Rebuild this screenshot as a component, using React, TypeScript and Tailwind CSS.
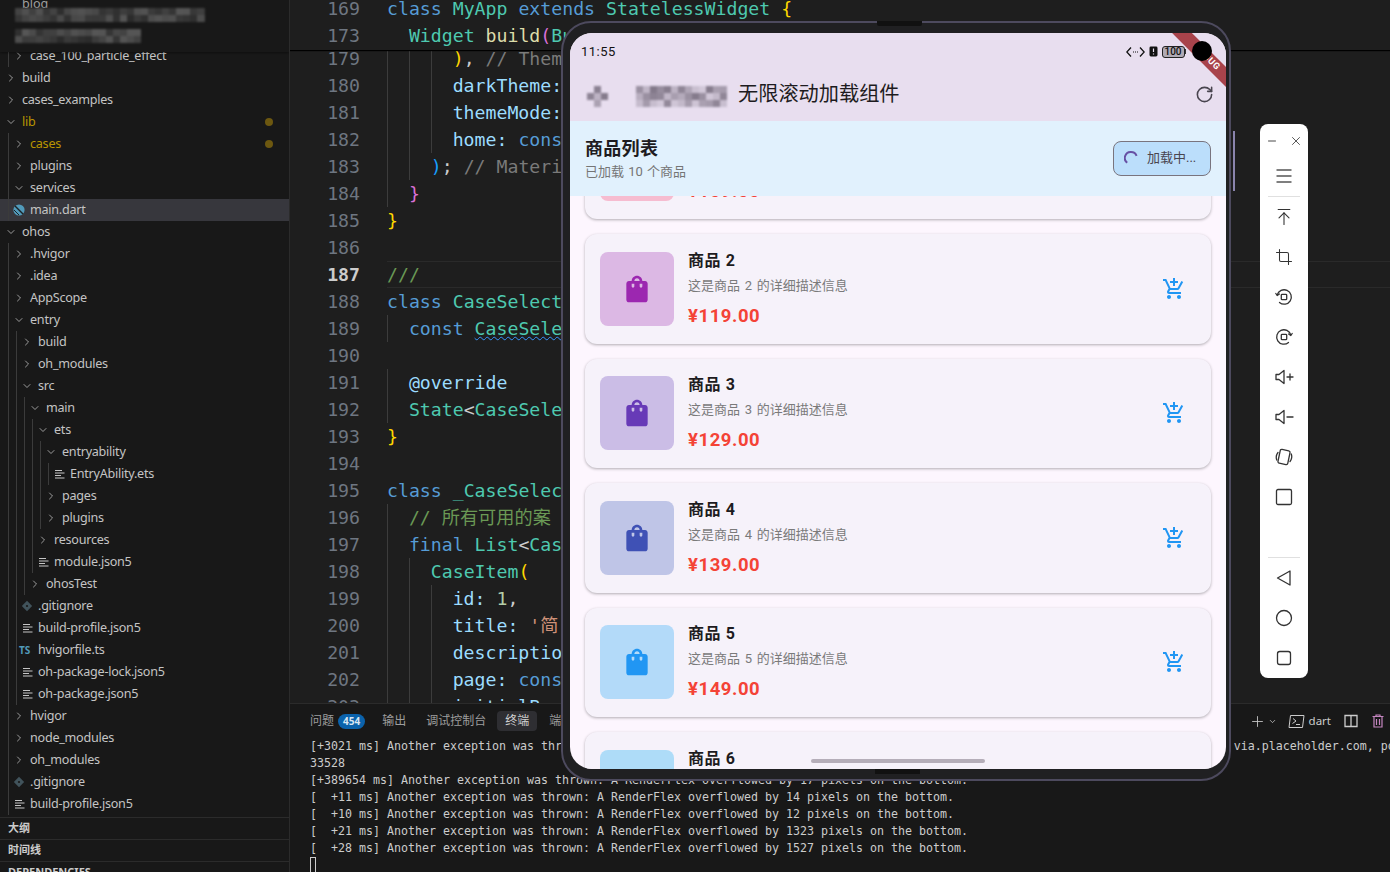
import React from "react";
import { ChevronRight, ChevronDown, RotateCw, Minus, X, Crop, ArrowUpToLine, Plus } from "lucide-react";
import { MdShoppingBag, MdAddShoppingCart } from "react-icons/md";

const sans = "font-['Noto_Sans','Noto_Sans_CJK_SC',sans-serif]";
const cjk = "font-['Roboto','Noto_Sans_CJK_SC',sans-serif]";

type Row = { t: string; d: number; k?: "o" | "c" | "dart" | "git" | "json" | "ts"; c?: string; active?: boolean; dot?: boolean };
const rows: Row[] = [
  { t: "case_100_particle_effect", d: 1, k: "c" },
  { t: "build", d: 0, k: "c" },
  { t: "cases_examples", d: 0, k: "c" },
  { t: "lib", d: 0, k: "o", c: "text-[#b89500]", dot: true },
  { t: "cases", d: 1, k: "c", c: "text-[#b89500]", dot: true },
  { t: "plugins", d: 1, k: "c" },
  { t: "services", d: 1, k: "o" },
  { t: "main.dart", d: 1, k: "dart", active: true },
  { t: "ohos", d: 0, k: "o" },
  { t: ".hvigor", d: 1, k: "c" },
  { t: ".idea", d: 1, k: "c" },
  { t: "AppScope", d: 1, k: "c" },
  { t: "entry", d: 1, k: "o" },
  { t: "build", d: 2, k: "c" },
  { t: "oh_modules", d: 2, k: "c" },
  { t: "src", d: 2, k: "o" },
  { t: "main", d: 3, k: "o" },
  { t: "ets", d: 4, k: "o" },
  { t: "entryability", d: 5, k: "o" },
  { t: "EntryAbility.ets", d: 6, k: "json" },
  { t: "pages", d: 5, k: "c" },
  { t: "plugins", d: 5, k: "c" },
  { t: "resources", d: 4, k: "c" },
  { t: "module.json5", d: 4, k: "json" },
  { t: "ohosTest", d: 3, k: "c" },
  { t: ".gitignore", d: 2, k: "git" },
  { t: "build-profile.json5", d: 2, k: "json" },
  { t: "hvigorfile.ts", d: 2, k: "ts" },
  { t: "oh-package-lock.json5", d: 2, k: "json" },
  { t: "oh-package.json5", d: 2, k: "json" },
  { t: "hvigor", d: 1, k: "c" },
  { t: "node_modules", d: 1, k: "c" },
  { t: "oh_modules", d: 1, k: "c" },
  { t: ".gitignore", d: 1, k: "git" },
  { t: "build-profile.json5", d: 1, k: "json" },
];

function Mosaic({ w, h, seed, light, size = 8, plus }: { w: number; h: number; seed: number; light?: boolean; size?: number; plus?: boolean }) {
  const cells: React.ReactNode[] = [];
  for (let y = 0; y < h; y += size) {
    for (let x = 0; x < w; x += size) {
      if (plus && x !== size && y !== size) continue;
      const n = Math.abs(Math.sin(seed + x * 12.9898 + y * 78.233) * 43758.5453) % 1;
      const fill = light
        ? `rgb(${Math.round(215 - n * 85)},${Math.round(205 - n * 85)},${Math.round(222 - n * 85)})`
        : `rgb(${Math.round(42 + n * 46)},${Math.round(42 + n * 46)},${Math.round(42 + n * 46)})`;
      cells.push(<rect key={`${x}-${y}`} x={x} y={y} width={size} height={size} fill={fill} />);
    }
  }
  return (
    <svg width={w} height={h} className="block blur-[1px]">
      {cells}
    </svg>
  );
}

function FileIcon({ k }: { k?: Row["k"] }) {
  if (k === "c") return <ChevronRight size={12} strokeWidth={1.5} className="text-[#c5c5c5] -ml-[3px]" />;
  if (k === "o") return <ChevronDown size={12} strokeWidth={1.5} className="text-[#c5c5c5] -ml-[3px]" />;
  if (k === "dart")
    return (
      <svg width="14" height="14" viewBox="0 0 14 14" className="-ml-[4px]">
        <circle cx="7" cy="7" r="5.6" fill="#519aba" />
        <path d="M3 3 L11 11" stroke="#1b2226" strokeWidth="1.4" />
        <path d="M2 7 L7 12" stroke="#1b2226" strokeWidth="1" />
      </svg>
    );
  if (k === "git")
    return (
      <svg width="12" height="12" viewBox="0 0 12 12" className="-ml-[3px]">
        <path d="M6 .8 11.2 6 6 11.2.8 6Z" fill="#41535b" />
        <circle cx="6" cy="6" r="1.1" fill="#181818" />
      </svg>
    );
  if (k === "ts") return <span className="-ml-[5px] text-[10px] font-bold leading-none text-[#519aba]">TS</span>;
  return (
    <svg width="12" height="12" viewBox="0 0 12 12" className="-ml-[2px]">
      <path d="M1 2.5h7M1 5h9.5M1 7.5h6M1 10h9.5" stroke="#c5c5c5" strokeWidth="1.2" />
    </svg>
  );
}

function TreeRow({ r }: { r: Row }) {
  const guides = Array.from({ length: r.d });
  return (
    <div className={`relative flex h-[22px] items-stretch pl-2 ${r.active ? "bg-[#37373d]" : ""}`}>
      {guides.map((_, i) => (
        <span key={i} className="w-2 shrink-0 border-l border-[#3b3b3b]" />
      ))}
      <span className="flex w-[14px] shrink-0 items-center">
        <FileIcon k={r.k} />
      </span>
      <span className={`flex items-center whitespace-pre text-[12.6px] tracking-[-0.25px] ${r.c ?? "text-[#c4c4c4]"}`}>{r.t}</span>
      {r.dot && <span className="ml-auto mr-4 h-2 w-2 self-center rounded-full bg-[#6d5810]" />}
    </div>
  );
}

function Sidebar() {
  return (
    <aside className={`${sans} relative isolate flex h-full w-[290px] shrink-0 flex-col overflow-hidden border-r border-[#2b2b2b] bg-[#181818]`}>
      <div className="relative z-10 h-[52px] shrink-0 bg-[#181818] pl-[15px] shadow-[0_1px_2px_rgba(0,0,0,0.4)]">
        <div className="h-[8px] overflow-hidden pl-[7px] text-[12.6px] leading-[8px] text-[#a0a0a0]">blog</div>
        <Mosaic w={190} h={14} seed={1} size={7} />
        <div className="h-[7px]" />
        <Mosaic w={126} h={14} seed={5} size={7} />
        <div className="h-[2px]" />
      </div>
      <div className="-mt-[7px]">
        {rows.map((r, i) => (
          <TreeRow key={i} r={r} />
        ))}
      </div>
      <div className="mt-[2px] text-[11px] font-bold text-[#cccccc]">
        <div className="flex h-[22px] items-center border-t border-[#2b2b2b] pl-2">大纲</div>
        <div className="flex h-[22px] items-center border-t border-[#2b2b2b] pl-2">时间线</div>
        <div className="flex h-[22px] items-center border-t border-[#2b2b2b] pl-2">DEPENDENCIES</div>
      </div>
    </aside>
  );
}

const K = "text-[#569cd6]";
const T = "text-[#4ec9b0]";
const P = "text-[#9cdcfe]";
const F = "text-[#dcdcaa]";
const W = "text-[#cccccc]";
const C = "text-[#7a7a7a]";
const G = "text-[#6a9955]";
const Y = "text-[#ffd700]";
const M = "text-[#da70d6]";
const B = "text-[#179fff]";
const S = "text-[#ce9178]";
const N = "text-[#b5cea8]";

type Seg = [string, string];
type Line = { n: number; g?: number; segs: Seg[]; cur?: boolean };
const lines: Line[] = [
  { n: 179, g: 3, segs: [[")", Y], [", ", W], ["// Them", C]] },
  { n: 180, g: 3, segs: [["darkTheme:", P]] },
  { n: 181, g: 3, segs: [["themeMode:", P]] },
  { n: 182, g: 3, segs: [["home: ", P], ["cons", K]] },
  { n: 183, g: 2, segs: [[")", B], ["; ", W], ["// Materi", C]] },
  { n: 184, g: 1, segs: [["}", M]] },
  { n: 185, segs: [["}", Y]] },
  { n: 186, segs: [] },
  { n: 187, segs: [["///", G]], cur: true },
  { n: 188, segs: [["class ", K], ["CaseSelect", T]] },
  { n: 189, g: 1, segs: [["const ", K], ["CaseSele", T]] },
  { n: 190, segs: [] },
  { n: 191, g: 1, segs: [["@override", P]] },
  { n: 192, g: 1, segs: [["State", T], ["<", W], ["CaseSele", T]] },
  { n: 193, segs: [["}", Y]] },
  { n: 194, segs: [] },
  { n: 195, segs: [["class ", K], ["_CaseSelec", T]] },
  { n: 196, g: 1, segs: [["// 所有可用的案", G]] },
  { n: 197, g: 1, segs: [["final ", K], ["List", T], ["<", W], ["Cas", T]] },
  { n: 198, g: 2, segs: [["CaseItem", T], ["(", Y]] },
  { n: 199, g: 3, segs: [["id: ", P], ["1", N], [",", W]] },
  { n: 200, g: 3, segs: [["title: ", P], ["'简", S]] },
  { n: 201, g: 3, segs: [["descriptio", P]] },
  { n: 202, g: 3, segs: [["page: ", P], ["cons", K]] },
  { n: 203, g: 3, segs: [["initialB", P]] },
];

function CodeRow({ l }: { l: Line }) {
  return (
    <div className="flex h-[27px] leading-[27px]">
      <span className={`w-[71px] shrink-0 pr-[1px] text-right ${l.cur ? "font-bold text-[#cccccc]" : "text-[#6e7681]"}`}>{l.n}</span>
      <div className={`ml-[26px] flex min-w-0 flex-1 whitespace-pre ${l.cur ? "border-y border-[#2a2a2a]" : ""}`}>
        {Array.from({ length: l.g ?? 0 }).map((_, i) => (
          <span key={i} className="w-[21.9px] shrink-0 border-l border-[#3c3c3c]" />
        ))}
        <span className={`${l.cur ? "-mt-px" : ""}`}>
          {l.n === 189 ? (
            <>
              <span className={K}>const </span>
              <span className={`${T} underline decoration-wavy decoration-[#3794ff] decoration-1`}>CaseSele</span>
            </>
          ) : (
            l.segs.map((s, i) => (
              <span key={i} className={s[1]}>
                {s[0]}
              </span>
            ))
          )}
        </span>
      </div>
    </div>
  );
}

function Editor() {
  return (
    <div className="relative isolate h-[703px] shrink-0 overflow-hidden bg-[#1e1e1e] font-['DejaVu_Sans_Mono','Noto_Sans_CJK_SC',monospace] text-[18.2px]">
      <div className="relative z-10 h-[50px] overflow-hidden bg-[#1e1e1e] shadow-[0_1px_1px_#000]">
        <div className="-mt-[5px]">
          <CodeRow l={{ n: 169, segs: [["class ", K], ["MyApp ", T], ["extends ", K], ["StatelessWidget ", T], ["{", Y]] }} />
          <CodeRow l={{ n: 173, segs: [["  ", W], ["Widget ", T], ["build", F], ["(", M], ["Bu", T]] }} />
        </div>
      </div>
      <div className="-mt-[5px]">
        {lines.map((l) => (
          <CodeRow key={l.n} l={l} />
        ))}
      </div>
    </div>
  );
}

const term = [
  "[+3021 ms] Another exception was thrown: Failed to load image from".padEnd(132, " ") + "via.placeholder.com, port",
  "33528",
  "[+389654 ms] Another exception was thrown: A RenderFlex overflowed by 17 pixels on the bottom.",
  "[  +11 ms] Another exception was thrown: A RenderFlex overflowed by 14 pixels on the bottom.",
  "[  +10 ms] Another exception was thrown: A RenderFlex overflowed by 12 pixels on the bottom.",
  "[  +21 ms] Another exception was thrown: A RenderFlex overflowed by 1323 pixels on the bottom.",
  "[  +28 ms] Another exception was thrown: A RenderFlex overflowed by 1527 pixels on the bottom.",
];

function Panel() {
  return (
    <div className="flex min-h-0 flex-1 flex-col overflow-hidden border-t border-[#2b2b2b] bg-[#181818]">
      <div className={`${sans} flex h-[34px] shrink-0 items-center pl-[20px] text-[12px] text-[#9d9d9d]`}>
        <span>问题</span>
        <span className="ml-[4px] rounded-full bg-[#0b62ab] px-[5px] text-[10px] font-bold leading-[15px] text-[#d8e6f2]">454</span>
        <span className="ml-[17px]">输出</span>
        <span className="ml-[20px]">调试控制台</span>
        <span className="ml-[11px] rounded-[4px] bg-[#2e2e32] px-[8px] py-[1px] text-[#d0d0d0]">终端</span>
        <span className="ml-[12px]">端口</span>
        <div className="ml-auto flex items-center text-[#cccccc]">
          <Plus size={17} strokeWidth={1.2} />
          <ChevronDown size={9} className="ml-[2px]" />
          <svg width="17" height="15" viewBox="0 0 17 15" className="ml-[11px]">
            <path d="M2.5 1.5h13.5l-1.5 12H1z" fill="none" stroke="#cccccc" />
            <path d="M5 4.5l3 2.5-3.5 2.5M8 10.5h4" fill="none" stroke="#cccccc" />
          </svg>
          <span className="ml-[4px] text-[11.5px]">dart</span>
          <svg width="14" height="14" viewBox="0 0 14 14" className="ml-[13px]">
            <path d="M1 1.5h12v11H1zM7 1.5v11" fill="none" stroke="#cccccc" strokeWidth="1.3" />
          </svg>
          <svg width="12" height="14" viewBox="0 0 12 14" className="ml-[14px] mr-[6px]">
            <path d="M.5 2.5h11M4 2.5V1h4v1.5M2 2.5V13h8V2.5M4.5 5v6M7.5 5v6" fill="none" stroke="#c586c0" strokeWidth="1.2" />
          </svg>
        </div>
      </div>
      <div className="pl-[20px] font-['DejaVu_Sans_Mono',monospace] text-[11.64px] leading-[17px] whitespace-pre text-[#cccccc]">
        {term.map((t, i) => (
          <div key={i} className="h-[17px]">
            {t}
          </div>
        ))}
        <div className="h-[17px] w-[6px] border border-[#cccccc]" />
      </div>
    </div>
  );
}

const products = [
  { n: 1, price: "¥109.00", thumb: "bg-[#f6bcd0]", icon: "text-[#e91e63]" },
  { n: 2, price: "¥119.00", thumb: "bg-[#dcb8e4]", icon: "text-[#9c27b0]" },
  { n: 3, price: "¥129.00", thumb: "bg-[#cbbde6]", icon: "text-[#673ab7]" },
  { n: 4, price: "¥139.00", thumb: "bg-[#bfc5e7]", icon: "text-[#3f51b5]" },
  { n: 5, price: "¥149.00", thumb: "bg-[#b3daf9]", icon: "text-[#2196f3]" },
  { n: 6, price: "¥159.00", thumb: "bg-[#aedcf8]", icon: "text-[#03a9f4]" },
];

function ProductCard({ p }: { p: (typeof products)[number] }) {
  return (
    <div className="flex h-[109.5px] shrink-0 items-center rounded-[12px] bg-[#f6f2fa] pl-[15px] pr-[25px] shadow-[0_1px_3px_rgba(0,0,0,0.3)]">
      <div className={`flex h-[74px] w-[74px] shrink-0 items-center justify-center rounded-[8px] ${p.thumb}`}>
        <MdShoppingBag size={32} className={p.icon} />
      </div>
      <div className="ml-[14px] flex flex-col">
        <div className="text-[16px] font-bold leading-[22px] tracking-[0.6px] text-[#1d1b20]">商品 {p.n}</div>
        <div className="mt-[5px] text-[13px] leading-[18px] text-[#7a7a7a] [word-spacing:1.5px]">这是商品 {p.n} 的详细描述信息</div>
        <div className="mt-[9px] text-[18.5px] font-bold leading-[24px] tracking-[0.55px] text-[#f44336]">{p.price}</div>
      </div>
      <MdAddShoppingCart size={24} className="ml-auto text-[#2196f3]" />
    </div>
  );
}

function Phone() {
  return (
    <div className="absolute left-[561px] top-[21px] z-20 h-[760px] w-[670px] rounded-[30px] border-2 border-[#4d4a5e] bg-[#202022] p-[2px]">
      <div className="absolute left-[314px] -top-[2px] h-[5px] w-[45px] rounded-b-[2px] bg-[#111]" />
      <div className="absolute left-[312px] top-[746px] h-[5px] w-[45px] bg-[#111]" />
      <div className={`${cjk} absolute left-[7px] top-[10px] flex h-[736px] w-[656px] flex-col overflow-hidden rounded-[22px] bg-[#fdf6fe]`}>
        <div className="relative z-10 flex h-[88px] shrink-0 flex-col bg-[#e8deef]">
          <div className="flex h-[37px] shrink-0 items-center pl-[11px] pr-[13px]">
            <span className="text-[13px] tracking-[0.5px] text-[#111]">11:55</span>
            <div className="ml-auto flex items-center">
              <svg width="19" height="12" viewBox="0 0 19 12">
                <path d="M5 1.5.8 6 5 10.5M14 1.5 18.2 6 14 10.5" fill="none" stroke="#111" strokeWidth="1.3" />
                <path d="M7 6h1M9 6h1M11 6h1" stroke="#111" strokeWidth="1.2" />
              </svg>
              <svg width="9" height="11" viewBox="0 0 9 11" className="ml-[4px]">
                <rect x=".5" y=".5" width="8" height="10" rx="1.4" fill="#111" />
                <path d="M4.5 2.5v3.5M4.5 7.5v1" stroke="#e8deef" strokeWidth="1.2" />
              </svg>
              <span className="ml-[4px] flex h-[12px] w-[23px] items-center justify-center rounded-[3px] border border-[#222] bg-[#b0aab4] text-[10px] font-medium leading-none text-[#111]">100</span>
              <span className="h-[5px] w-[1.5px] bg-[#333]" />
              <span className="w-[27px]" />
            </div>
          </div>
          <div className="flex min-h-0 flex-1 items-center pb-[3px] pl-[17px] pr-[12px]">
            <span className="mt-[5px]">
              <Mosaic w={21} h={21} seed={3} light size={7} plus />
            </span>
            <span className="ml-[28px] mt-[5px]">
              <Mosaic w={91} h={21} seed={9} light size={7} />
            </span>
            <span className="ml-[11px] text-[20.2px] text-[#1d1b20]">无限滚动加载组件</span>
            <RotateCw size={19} strokeWidth={2} className="ml-auto text-[#49454f]" />
          </div>
        </div>
        <div className="relative z-10 flex h-[75px] shrink-0 items-center justify-between bg-[#e1f1fd] pl-[15px] pr-[15px]">
          <div>
            <div className="-mt-[1px] pb-[1px] text-[18px] font-bold leading-[26px] tracking-[0.3px] text-[#1d1b20]">商品列表</div>
            <div className="text-[13px] leading-[18px] text-[#757575] [word-spacing:1px]">已加载 10 个商品</div>
          </div>
          <div className="flex h-[35px] w-[98px] items-center rounded-[8px] border border-[#79747e] bg-[#bbdefb] pb-[1px] pl-[10px]">
            <svg width="14" height="14" viewBox="0 0 14 14" className="shrink-0">
              <path d="M3.2 11.8A6 6 0 0 1 7 1a6 6 0 0 1 5.6 3.8" fill="none" stroke="#6750a4" strokeWidth="2" />
            </svg>
            <span className="ml-[9px] text-[13px] text-[#49454f]">加载中...</span>
          </div>
        </div>
        <div className="-mt-[86.5px] flex flex-col gap-[15px] px-[15px]">
          {products.map((p) => (
            <ProductCard key={p.n} p={p} />
          ))}
        </div>
        <div className="absolute bottom-[6px] left-[241px] z-10 h-[4px] w-[174px] rounded-full bg-[#b5aeb9]" />
        <div className="absolute left-[587px] top-[18px] z-20 flex h-[14px] w-[100px] rotate-45 items-center justify-center bg-[#a8434b] text-[9px] font-bold tracking-[0.5px] text-white">DEBUG</div>
        <div className="absolute left-[622px] top-[8px] z-30 h-[20px] w-[20px] rounded-full bg-black" />
      </div>
      <div className="absolute -right-[6px] top-[108px] h-[60px] w-[2px] bg-[#8a84ad]" />
    </div>
  );
}

function Ico({ children }: { children: React.ReactNode }) {
  return (
    <div className="flex h-[40px] items-center justify-center text-[#333]">
      <svg width="20" height="20" viewBox="0 0 20 20" fill="none" stroke="#333" strokeWidth="1.3" strokeLinejoin="round" strokeLinecap="round">
        {children}
      </svg>
    </div>
  );
}

function Toolbar() {
  return (
    <div className="absolute left-[1260px] top-[124px] z-20 flex h-[554px] w-[48px] flex-col rounded-[8px] bg-white">
      <div className="flex h-[32px] shrink-0 items-center justify-between pl-[6px] pr-[5px] pt-[1px] text-[#333]">
        <Minus size={12} strokeWidth={1.8} />
        <X size={14} strokeWidth={1.4} />
      </div>
      <div className="flex h-[40px] shrink-0 items-center justify-center">
        <svg width="16" height="14" viewBox="0 0 16 14">
          <path d="M.5 1h15M.5 7h15M.5 13h15" stroke="#555" strokeWidth="1.3" />
        </svg>
      </div>
      <div className="mx-[8px] h-px shrink-0 bg-[#e0e0e0]" />
      <div className="flex h-[40px] items-center justify-center">
        <ArrowUpToLine size={20} strokeWidth={1.3} className="text-[#333]" />
      </div>
      <div className="flex h-[40px] items-center justify-center">
        <Crop size={18} strokeWidth={1.4} className="text-[#333]" />
      </div>
      <Ico>
        <path d="M3.2 8A7.2 7.2 0 1 1 5.5 15.5" />
        <path d="M1.8 6.5 3.2 8.5 5.4 7" />
        <rect x="7.3" y="7.3" width="5.4" height="5.4" rx=".8" />
      </Ico>
      <Ico>
        <path d="M16.8 8A7.2 7.2 0 1 0 14.5 15.5" />
        <path d="M18.2 6.5 16.8 8.5 14.6 7" />
        <rect x="7.3" y="7.3" width="5.4" height="5.4" rx=".8" />
      </Ico>
      <Ico>
        <path d="M2 7.5h3L10 3.5v13L5 12.5H2z" />
        <path d="M13 10h6M16 7v6" />
      </Ico>
      <Ico>
        <path d="M2 7.5h3L10 3.5v13L5 12.5H2z" />
        <path d="M13 10h6" />
      </Ico>
      <Ico>
        <rect x="5" y="3" width="10" height="14" rx="1.6" transform="rotate(12 10 10)" />
        <path d="M4 5.5A8 8 0 0 0 2.7 13M16 14.5A8 8 0 0 0 17.3 7" />
      </Ico>
      <Ico>
        <rect x="2.5" y="2.5" width="15" height="15" rx="1.5" />
      </Ico>
      <div className="h-[40px] shrink-0" />
      <div className="mx-[8px] h-px shrink-0 bg-[#e0e0e0]" />
      <Ico>
        <path d="M16 3v14L3.5 10z" />
      </Ico>
      <Ico>
        <circle cx="10" cy="10" r="7.5" />
      </Ico>
      <Ico>
        <rect x="3.5" y="3.5" width="13" height="13" rx="2.2" />
      </Ico>
    </div>
  );
}

export default function App() {
  return (
    <div className="relative flex h-[872px] w-[1390px] overflow-hidden bg-[#1e1e1e]">
      <Sidebar />
      <main className="flex h-full min-w-0 flex-1 flex-col">
        <Editor />
        <Panel />
      </main>
      <Phone />
      <Toolbar />
    </div>
  );
}
